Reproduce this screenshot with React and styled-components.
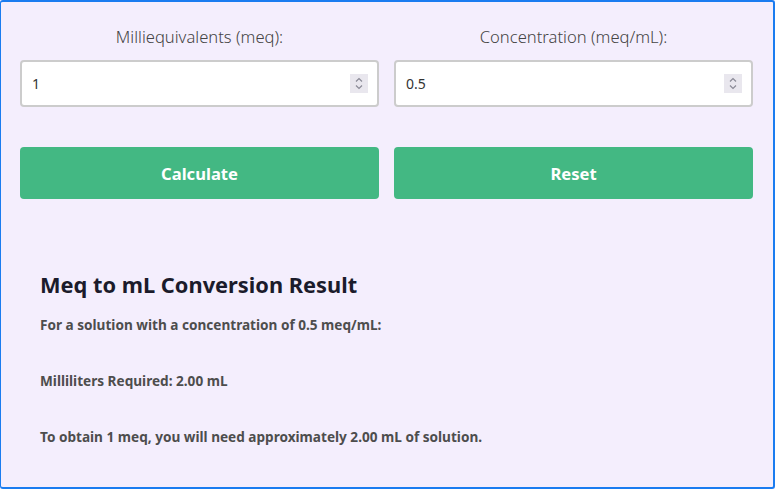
import React, { useState } from "react";
import styled, { createGlobalStyle } from "styled-components";

const Global = createGlobalStyle`
  html, body { margin: 0; padding: 0; background: #f4eefd; }
  body { font-family: "Noto Sans", "Open Sans", sans-serif; }
  * { box-sizing: border-box; }
`;

const Frame = styled.div`
  width: 775px;
  height: 489px;
  background: #f4eefd;
  border: 2px solid #1a7cf0;
  border-left: 1px solid #1a7cf0;
  border-radius: 3px;
  padding: 23px 20px 0 19px;
  overflow: hidden;
`;

const Grid = styled.div`
  display: grid;
  grid-template-columns: 1fr 1fr;
  column-gap: 15px;
`;

const Field = styled.div`
  display: flex;
  flex-direction: column;
`;

const Label = styled.label`
  text-align: center;
  font-size: 16.6px;
  font-weight: 300;
  color: #444;
  line-height: 24px;
  margin-bottom: 11px;
`;

const InputBox = styled.div`
  display: flex;
  align-items: center;
  height: 47px;
  background: #fff;
  border: 2px solid #cccccc;
  border-radius: 4px;
  padding: 0 9px 0 10px;
`;

const Input = styled.input`
  flex: 1;
  border: none;
  outline: none;
  background: transparent;
  font-family: inherit;
  font-size: 14px;
  color: #333;
  padding: 0;
`;

const Spinner = styled.div`
  width: 18px;
  height: 19px;
  background: #e9e7ee;
  display: flex;
  align-items: center;
  justify-content: center;
`;

const ButtonRow = styled(Grid)`
  margin-top: 40px;
`;

const Button = styled.button`
  height: 52px;
  border: none;
  border-radius: 4px;
  background: #43b883;
  color: #fff;
  font-family: inherit;
  font-size: 16.6px;
  font-weight: 700;
  cursor: pointer;
`;

const Result = styled.section`
  margin-top: 71px;
  padding: 0 20px;
`;

const Title = styled.h2`
  margin: 0 0 15px;
  font-size: 21.8px;
  font-weight: 700;
  color: #1b1b2b;
  line-height: 30px;
`;

const Line = styled.p`
  margin: 0 0 36px;
  font-size: 13.6px;
  font-weight: 700;
  color: #4d4d4d;
  line-height: 20px;
`;

const Arrows = () => (
  <svg width="10" height="15" viewBox="0 0 10 15" fill="none" stroke="#8a8a96" strokeWidth="1.2">
    <path d="M2 5.5 L5 2.5 L8 5.5" />
    <path d="M2 9.5 L5 12.5 L8 9.5" />
  </svg>
);

export default function App() {
  const [meq, setMeq] = useState("1");
  const [conc, setConc] = useState("0.5");
  return (
    <>
      <Global />
      <Frame>
        <Grid>
          <Field>
            <Label>Milliequivalents (meq):</Label>
            <InputBox>
              <Input value={meq} onChange={(e) => setMeq(e.target.value)} />
              <Spinner><Arrows /></Spinner>
            </InputBox>
          </Field>
          <Field>
            <Label>Concentration (meq/mL):</Label>
            <InputBox>
              <Input value={conc} onChange={(e) => setConc(e.target.value)} />
              <Spinner><Arrows /></Spinner>
            </InputBox>
          </Field>
        </Grid>
        <ButtonRow>
          <Button>Calculate</Button>
          <Button>Reset</Button>
        </ButtonRow>
        <Result>
          <Title>Meq to mL Conversion Result</Title>
          <Line>For a solution with a concentration of 0.5 meq/mL:</Line>
          <Line>Milliliters Required: 2.00 mL</Line>
          <Line>To obtain 1 meq, you will need approximately 2.00 mL of solution.</Line>
        </Result>
      </Frame>
    </>
  );
}
